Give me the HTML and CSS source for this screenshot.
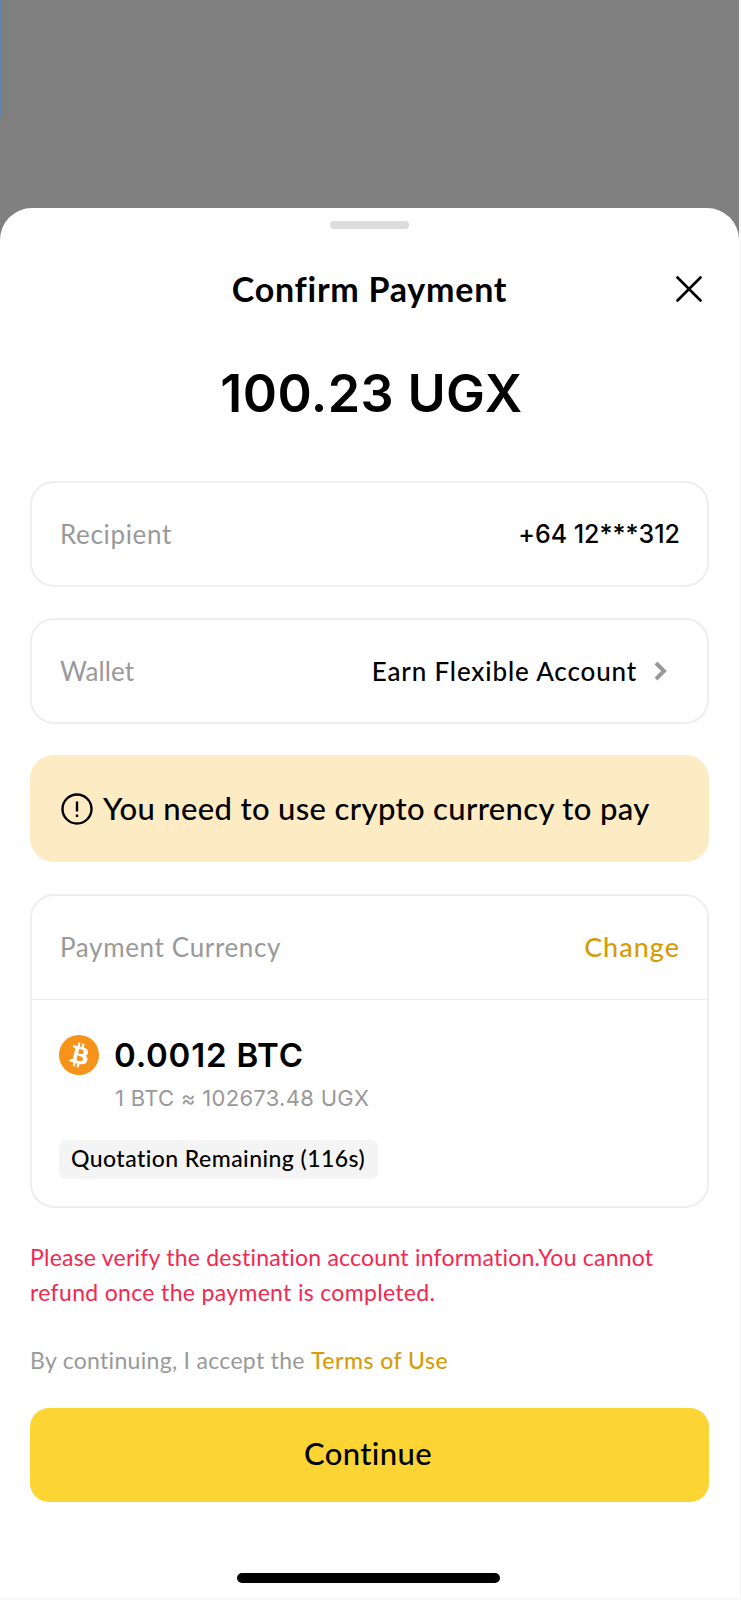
FILE: index.html
```html
<!DOCTYPE html>
<html lang="en">
<head>
<meta charset="utf-8">
<title>Confirm Payment</title>
<link rel="stylesheet" href="styles.css">
</head>
<body>
<div class="screen">
  <main class="sheet">
    <div class="handle"></div>
    <header class="header">
      <h1 class="title">Confirm Payment</h1>
      <svg class="close" viewBox="0 0 26 26"><path d="M1.5 1.5 24.5 24.5M24.5 1.5 1.5 24.5"/></svg>
    </header>
    <div class="amount">100.23 UGX</div>
    <section class="card row">
      <span class="label">Recipient</span>
      <span class="value phone">+64 12***312</span>
    </section>
    <section class="card row">
      <span class="label wallet">Wallet</span>
      <span class="value account">Earn Flexible Account<svg class="chevron" viewBox="0 0 14 20"><path d="M2 2 10 10 2 18"/></svg></span>
    </section>
    <section class="notice">
      <svg class="info" viewBox="0 0 32 32"><circle cx="16" cy="16" r="14.5"/><path d="M16 8.5v10M16 21.5v2.5"/></svg>
      <span>You need to use crypto currency to pay</span>
    </section>
    <section class="card currency">
      <div class="row currency-head">
        <span class="label">Payment Currency</span>
        <a class="change">Change</a>
      </div>
      <div class="quote">
        <svg class="coin" viewBox="0 0 32 32"><circle cx="16" cy="16" r="16" fill="#f7931a"/><path fill="#fff" d="M23.19 14.02c.31-2.1-1.29-3.23-3.48-3.98l.71-2.85-1.73-.43-.69 2.77c-.46-.11-.92-.22-1.39-.33l.7-2.79-1.73-.43-.71 2.84c-.38-.09-.75-.17-1.1-.26l-2.4-.6-.46 1.85s1.29.3 1.26.32c.7.17.83.64.8 1.01l-1.96 7.87c-.08.21-.3.53-.79.41.02.03-1.26-.31-1.26-.31l-.86 1.98 2.26.57c.42.1.83.21 1.24.32l-.72 2.88 1.73.43.71-2.85c.47.13.93.25 1.38.36l-.71 2.84 1.73.43.72-2.88c2.95.56 5.17.33 6.1-2.34.75-2.15-.04-3.39-1.59-4.2 1.13-.26 1.98-1 2.21-2.53zm-3.96 5.54c-.53 2.15-4.15.99-5.32.69l.95-3.8c1.17.29 4.93.87 4.37 3.11zm.54-5.57c-.49 1.95-3.49.96-4.47.72l.86-3.45c.98.24 4.12.7 3.61 2.73z"/></svg>
        <div>
          <div class="crypto">0.0012 BTC</div>
          <div class="rate">1 BTC ≈ 102673.48 UGX</div>
        </div>
      </div>
      <div class="chip">Quotation Remaining (116s)</div>
    </section>
    <p class="warning">Please verify the destination account information.You cannot <span class="warning-end">refund once the payment is completed.</span></p>
    <p class="terms">By continuing, I accept the <a class="link">Terms of Use</a></p>
    <button class="continue">Continue</button>
    <div class="home"></div>
  </main>
</div>
</body>
</html>
```
FILE: styles.css
```css
* { box-sizing: border-box; }
body { margin: 0; font-family: Lato, "Open Sans", sans-serif; font-variant-ligatures: none; color: #000; background: #f9f9f9; }
h1, p { margin: 0; font-weight: inherit; }
.screen { height: 1600px; padding: 208px 3px 2px 0; background: linear-gradient(#5d82ad, #5d82ad) 0 0 / 1px 118px no-repeat, linear-gradient(#808080, #808080) 0 0 / 739px 250px no-repeat, #f9f9f9; }
.sheet { width: 739px; height: 1390px; padding: 13px 30px 0; display: flex; flex-direction: column; background: #fff; border-radius: 32px 32px 0 0; }
.handle { flex: none; width: 79px; height: 8px; margin: 0 auto; border-radius: 4px; background: #dcdcdc; }
.header { flex: none; display: grid; grid-template-columns: 1fr auto 1fr; align-items: center; height: 50px; margin-top: 35px; }
.title { grid-column: 2; font-size: 34px; font-weight: 700; line-height: 50px; letter-spacing: .75px; }
.close { justify-self: end; width: 26px; height: 26px; margin: 0 7px 0 0; fill: none; stroke: #000; stroke-width: 2.6; stroke-linecap: round; }
.amount { flex: none; height: 64px; margin-top: 48px; padding-left: 4px; text-align: center; font: 600 52px/64px Inter, sans-serif; letter-spacing: .4px; }
.card { flex: none; border: 2px solid #eee; border-radius: 24px; }
.row { display: flex; align-items: center; justify-content: space-between; height: 106px; padding: 0 28px; font-size: 26px; }
.amount + .card { margin-top: 55px; }
.card + .card { margin-top: 31px; }
.label { color: #999; letter-spacing: .65px; }
.wallet { letter-spacing: .1px; }
.value { font-weight: 500; letter-spacing: .85px; }
.phone { margin-right: -1px; font-family: Inter, sans-serif; font-size: 25px; letter-spacing: 0; }
.account { display: flex; align-items: center; margin-right: -1px; }
.chevron { width: 14px; height: 20px; margin: 0 12px 0 17px; fill: none; stroke: #999; stroke-width: 4; }
.notice { flex: none; display: flex; align-items: center; height: 107px; margin: 31px 0 32px; padding: 0 0 0 31px; gap: 10px; border-radius: 24px; background: #fcebc3; font-size: 31px; font-weight: 500; letter-spacing: .35px; }
.notice span { margin-top: -2px; }
.info { width: 32px; height: 32px; fill: none; stroke: #000; stroke-width: 2.4; }
.currency { height: 314px; }
.currency-head { height: 104px; border-bottom: 1px solid #ececec; }
.currency-head > * { margin-top: -2px; }
.change, .link { color: #d69c08; font-weight: 500; letter-spacing: .5px; }
.change { font-size: 27px; letter-spacing: 1px; margin-right: -1px; }
.quote { display: flex; padding: 35px 0 0 27px; gap: 15px; }
.coin { width: 40px; height: 40px; }
.crypto { height: 40px; font: 600 33px/40px Inter, sans-serif; letter-spacing: .8px; }
.rate { height: 32px; margin-top: 7px; padding-left: 1px; color: #999; font: 400 22px/32px Inter, sans-serif; letter-spacing: .3px; }
.chip { width: 319px; height: 39px; margin: 26px 0 0 27px; padding-left: 12px; border-radius: 7px; background: #f4f4f4; font-size: 23px; font-weight: 500; line-height: 37px; letter-spacing: .45px; }
.warning { flex: none; height: 70px; margin-top: 32px; color: #f5274f; font-size: 23px; line-height: 35px; letter-spacing: .23px; }
.warning-end { letter-spacing: .33px; }
.terms { flex: none; height: 34px; margin-top: 33px; color: #999; font-size: 23px; line-height: 34px; letter-spacing: .3px; }
.continue { flex: none; height: 94px; margin-top: 31px; padding: 0 3px 3px 0; border: 0; border-radius: 19px; background: #fcd434; color: #000; font: 500 31px/91px Lato, sans-serif; letter-spacing: .4px; }
.home { flex: none; align-self: center; width: 263px; height: 10px; margin: 71px 2px 0 0; border-radius: 5px; background: #000; }
```
